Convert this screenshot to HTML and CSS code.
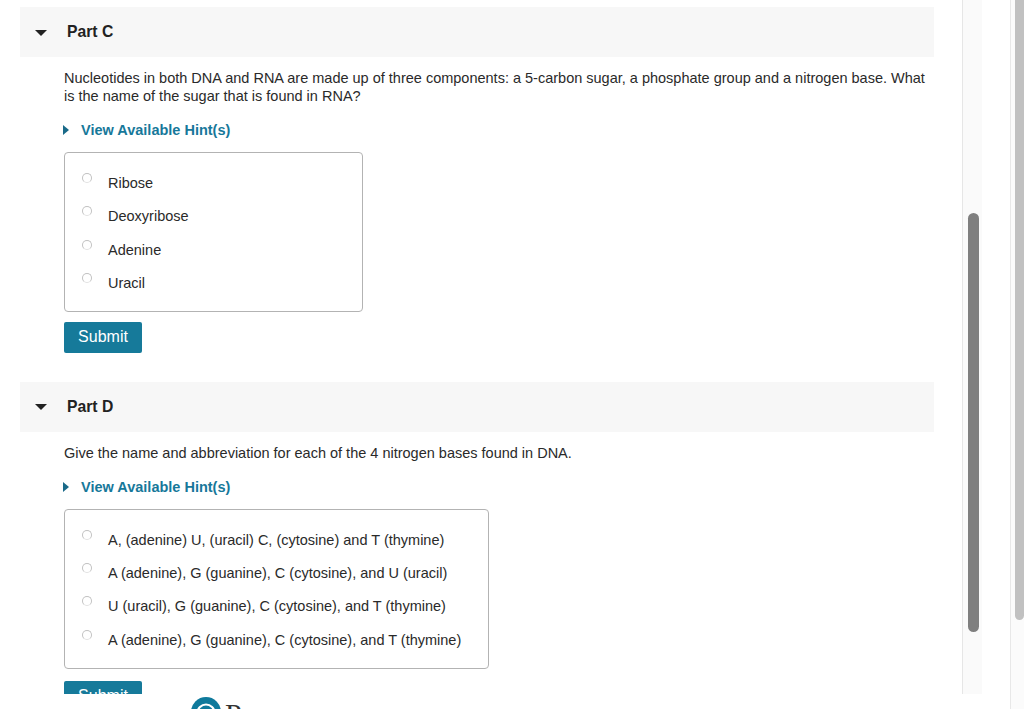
FILE: index.html
```html
<!DOCTYPE html>
<html>
<head>
<meta charset="utf-8">
<link rel="stylesheet" href="styles.css">
</head>
<body>
<div class="page">
  <div class="main">
    <div class="frame">
      <div class="content">
        <section class="part">
          <div class="part-header"><span class="caret"></span><span class="part-title">Part C</span></div>
          <div class="part-body">
            <p class="question">Nucleotides in both DNA and RNA are made up of three components: a 5-carbon sugar, a phosphate group and a nitrogen base. What is the name of the sugar that is found in RNA?</p>
            <div class="hint"><span class="hint-caret"></span><span>View Available Hint(s)</span></div>
            <div class="options">
              <label class="option"><span class="radio"></span><span>Ribose</span></label>
              <label class="option"><span class="radio"></span><span>Deoxyribose</span></label>
              <label class="option"><span class="radio"></span><span>Adenine</span></label>
              <label class="option"><span class="radio"></span><span>Uracil</span></label>
            </div>
            <div><button class="submit">Submit</button></div>
          </div>
        </section>
        <section class="part">
          <div class="part-header"><span class="caret"></span><span class="part-title">Part D</span></div>
          <div class="part-body">
            <p class="question">Give the name and abbreviation for each of the 4 nitrogen bases found in DNA.</p>
            <div class="hint"><span class="hint-caret"></span><span>View Available Hint(s)</span></div>
            <div class="options">
              <label class="option"><span class="radio"></span><span>A, (adenine) U, (uracil) C, (cytosine) and T (thymine)</span></label>
              <label class="option"><span class="radio"></span><span>A (adenine), G (guanine), C (cytosine), and U (uracil)</span></label>
              <label class="option"><span class="radio"></span><span>U (uracil), G (guanine), C (cytosine), and T (thymine)</span></label>
              <label class="option"><span class="radio"></span><span>A (adenine), G (guanine), C (cytosine), and T (thymine)</span></label>
            </div>
            <div><button class="submit">Submit</button></div>
          </div>
        </section>
      </div>
      <div class="inner-scroll"><div class="inner-thumb"></div></div>
    </div>
    <div class="footer">
      <svg class="logo-mark" width="30" height="30" viewBox="0 0 30 30"><circle cx="15" cy="15" r="15" fill="#0f7a9c"/><circle cx="15" cy="16" r="8.5" fill="none" stroke="#fff" stroke-width="2.2"/></svg>
      <span class="logo-text">Pearson</span>
    </div>
  </div>
  <div class="outer-scroll"><div class="outer-thumb"></div></div>
</div>
</body>
</html>
```

FILE: styles.css
```css
html, body {
  margin: 0;
  padding: 0;
  background: #fff;
}
body {
  width: 1024px;
  height: 709px;
  overflow: hidden;
  font-family: "Liberation Sans", Arial, Helvetica, sans-serif;
  color: #2a2a2a;
  font-size: 14.5px;
}
.page {
  display: flex;
  height: 709px;
}
.main {
  width: 1010px;
  display: flex;
  flex-direction: column;
}
.frame {
  display: flex;
  height: 694px;
  overflow: hidden;
}
.content {
  width: 962px;
  box-sizing: border-box;
  padding: 7px 28px 0 20px;
  overflow: hidden;
}
.part {
  margin-bottom: 29px;
}
.part-header {
  display: flex;
  align-items: center;
  height: 50px;
  background: #f7f7f7;
  padding-left: 15px;
}
.caret {
  width: 0;
  height: 0;
  border-left: 6px solid transparent;
  border-right: 6px solid transparent;
  border-top: 6px solid #222;
  margin-top: 1px;
}
.part-title {
  margin-left: 20px;
  font-weight: bold;
  font-size: 15.7px;
  color: #222;
}
.part-body {
  padding-left: 44px;
}
.question {
  margin: 12px 0 0 0;
  line-height: 18px;
  font-size: 14.5px;
  color: #2a2a2a;
}
.hint {
  display: flex;
  align-items: center;
  margin-top: 16px;
  height: 18px;
  color: #17789a;
  font-weight: bold;
  font-size: 14.5px;
}
.hint-caret {
  width: 0;
  height: 0;
  border-top: 5px solid transparent;
  border-bottom: 5px solid transparent;
  border-left: 6px solid #1a6a89;
  margin-left: -1px;
  margin-right: 12px;
}
.options {
  display: inline-flex;
  flex-direction: column;
  gap: 15.3px;
  min-width: 299px;
  box-sizing: border-box;
  margin-top: 13px;
  padding: 21px 27px 19px 17px;
  border: 1px solid #b3b3b3;
  border-radius: 4px;
}
.option {
  display: flex;
  align-items: flex-start;
  line-height: 18px;
  height: 18px;
  font-size: 14.5px;
  color: #2a2a2a;
  white-space: nowrap;
}
.radio {
  width: 10px;
  height: 10px;
  box-sizing: border-box;
  border-radius: 50%;
  border: 1px solid #c2c2c2;
  border-bottom-color: #e2e2e2;
  background: #fff;
  margin-top: -1px;
  margin-right: 16px;
  flex: none;
}
.submit {
  margin-top: 10px;
  height: 31px;
  width: 78px;
  padding: 0;
  border: none;
  border-radius: 2px;
  background: #167a9a;
  color: #fff;
  font-family: "Liberation Sans", Arial, Helvetica, sans-serif;
  font-size: 16px;
}
.part + .part .submit {
  margin-top: 12px;
}
.inner-scroll {
  width: 20px;
  box-sizing: border-box;
  border-left: 1px solid #e6e6e6;
  background: #fafafa;
  padding-top: 213px;
}
.inner-thumb {
  margin-left: 5px;
  width: 11px;
  height: 419px;
  border-radius: 6px;
  background: #7f7f7f;
}
.footer {
  height: 15px;
  overflow: hidden;
  display: flex;
  align-items: flex-start;
  padding-left: 191px;
  padding-top: 3px;
  box-sizing: border-box;
}
.logo-mark {
  flex: none;
}
.logo-text {
  margin-left: 4px;
  margin-top: 2px;
  font-family: "Liberation Serif", "Times New Roman", serif;
  font-size: 30px;
  line-height: 30px;
  color: #333;
}
.outer-scroll {
  width: 14px;
  box-sizing: border-box;
  border-left: 1px solid #e8e8e8;
  background: #fbfbfb;
}
.outer-thumb {
  margin-left: 4px;
  width: 9px;
  height: 620px;
  background: #c1c1c1;
  border-radius: 0 0 5px 5px;
}
```
